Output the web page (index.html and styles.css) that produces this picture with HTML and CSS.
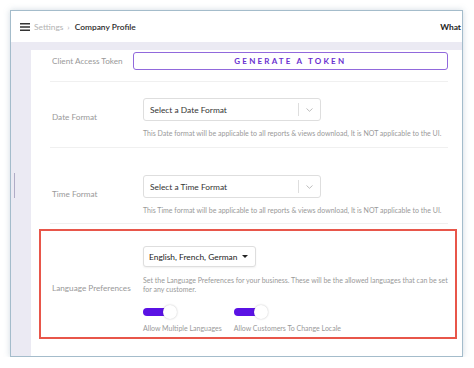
FILE: index.html
```html
<!DOCTYPE html>
<html lang="en">
<head>
  <meta charset="UTF-8">
  <meta name="viewport" content="width=device-width, initial-scale=1.0">
  <title>Company Profile - Settings</title>
  <link rel="stylesheet" href="styles.css">
</head>
<body>
  <div class="frame">
    <header class="topbar">
      <svg class="menu-icon" width="10" height="8" viewBox="0 0 10 8">
        <path d="M0 0.75H10M0 4H10M0 7.25H10" stroke="#333" stroke-width="1.3"/>
      </svg>
      <span class="crumb">Settings</span>
      <span class="crumb-sep">›</span>
      <span class="crumb-current">Company Profile</span>
      <span class="whats-new">What</span>
    </header>

    <div class="main">
      <aside class="sidebar">
        <div class="scroll-mark"></div>
      </aside>

      <div class="content">
        <div class="panel">
          <div class="row row-token">
            <span class="label">Client Access Token</span>
            <button class="token-button">GENERATE A TOKEN</button>
          </div>

          <div class="row row-date">
            <span class="label label-col">Date Format</span>
            <div class="control">
              <div class="select select-wide">
                <span class="select-text">Select a Date Format</span>
                <span class="select-arrow">
                  <svg width="7" height="4" viewBox="0 0 7 4"><path d="M0.5 0.5L3.5 3.3L6.5 0.5" fill="none" stroke="#b5b5b5" stroke-width="0.9"/></svg>
                </span>
              </div>
              <p class="help">This Date format will be applicable to all reports &amp; views download, It is NOT applicable to the UI.</p>
            </div>
          </div>

          <div class="row row-time">
            <span class="label label-col">Time Format</span>
            <div class="control">
              <div class="select select-wide">
                <span class="select-text">Select a Time Format</span>
                <span class="select-arrow">
                  <svg width="7" height="4" viewBox="0 0 7 4"><path d="M0.5 0.5L3.5 3.3L6.5 0.5" fill="none" stroke="#b5b5b5" stroke-width="0.9"/></svg>
                </span>
              </div>
              <p class="help">This Time format will be applicable to all reports &amp; views download, It is NOT applicable to the UI.</p>
            </div>
          </div>

          <div class="highlight">
            <div class="row row-lang">
              <span class="label label-col">Language Preferences</span>
              <div class="control">
                <div class="select select-lang">
                  <span class="select-value">English, French, German</span>
                  <span class="caret"></span>
                </div>
                <p class="help help-lang">Set the Language Preferences for your business. These will be the allowed languages that can be set<br>for any customer.</p>
                <div class="toggles">
                  <div class="toggle-item">
                    <span class="toggle on"></span>
                    <span class="toggle-label">Allow Multiple Languages</span>
                  </div>
                  <div class="toggle-item">
                    <span class="toggle on"></span>
                    <span class="toggle-label">Allow Customers To Change Locale</span>
                  </div>
                </div>
              </div>
            </div>
          </div>
        </div>
      </div>
    </div>
  </div>
</body>
</html>
```

FILE: styles.css
```css
body {
  margin: 0;
  background-color: #fff;
  font-family: Lato, "Open Sans", sans-serif;
  color: #333;
}
.frame {
  margin: 10px 0 0 10px;
  width: 453px;
  height: 347px;
  border: 1px solid #a4bccb;
  box-sizing: border-box;
  overflow: hidden;
  display: flex;
  flex-direction: column;
  box-shadow: 0 0 6px rgba(120, 150, 170, 0.35);
  background-color: #ebeaf3;
}
.topbar {
  height: 31px;
  flex-shrink: 0;
  background-color: #fff;
  display: flex;
  align-items: center;
  padding-left: 9px;
  padding-right: 1px;
  font-size: 8.4px;
  white-space: nowrap;
}
.menu-icon {
  margin-right: 4px;
}
.crumb {
  color: #b3b3b3;
}
.crumb-sep {
  color: #b3b3b3;
  margin: 0 5px 0 4px;
}
.crumb-current {
  color: #2b2b2b;
  font-weight: 600;
}
.whats-new {
  margin-left: auto;
  font-weight: 700;
  color: #222;
}
.main {
  flex: 1;
  display: flex;
}
.sidebar {
  width: 20px;
  flex-shrink: 0;
  background-color: #ebeaf3;
}
.scroll-mark {
  width: 1px;
  height: 25px;
  margin: 131px 0 0 3px;
  background-color: #b0acc6;
}
.content {
  flex: 1;
  padding-top: 8px;
}
.panel {
  background-color: #fff;
  height: 100%;
  padding-left: 8px;
}
.row {
  display: flex;
  align-items: center;
  margin: 0 14px 0 11px;
  padding-left: 2px;
  border-bottom: 1px solid #f0f0f0;
}
.label {
  font-size: 8.2px;
  color: #999;
}
.label-col {
  width: 91px;
  flex-shrink: 0;
  margin-top: -3px;
}
.row-token {
  padding: 2px 0 11px 2px;
  gap: 10px;
}
.token-button {
  flex: 1;
  height: 18px;
  border: 1px solid #9169dc;
  border-radius: 3px;
  background-color: #fff;
  color: #6a2fd0;
  font-family: Lato, "Open Sans", sans-serif;
  font-size: 8px;
  font-weight: 700;
  letter-spacing: 2.2px;
  padding: 0;
}
.row-date {
  padding-top: 16px;
  padding-bottom: 9px;
}
.row-time {
  padding-top: 27px;
  padding-bottom: 8px;
}
.control {
  display: flex;
  flex-direction: column;
}
.select {
  display: flex;
  align-items: center;
  background-color: #fff;
  border: 1px solid #dedede;
  border-radius: 3px;
  box-sizing: border-box;
}
.select-wide {
  width: 178px;
  height: 23px;
}
.select-text {
  flex: 1;
  padding-left: 6px;
  font-size: 8.4px;
  color: #333;
}
.select-arrow {
  width: 21px;
  height: 13px;
  border-left: 1px solid #dedede;
  display: flex;
  align-items: center;
  justify-content: center;
}
.help {
  margin: 8px 0 0;
  font-size: 7px;
  line-height: 9px;
  color: #999;
  white-space: nowrap;
}
.highlight {
  margin: 5px 5px 0 0;
  border: 2px solid #e8564a;
  height: 110px;
  box-sizing: border-box;
}
.row-lang {
  margin: 0;
  padding: 15px 0 0 11px;
  border-bottom: none;
}
.select-lang {
  width: 113px;
  height: 21px;
  box-shadow: 0 1px 2px rgba(0, 0, 0, 0.06);
}
.select-value {
  flex: 1;
  padding-left: 5px;
  font-size: 8.4px;
  color: #222;
}
.caret {
  width: 0;
  height: 0;
  border-left: 3px solid transparent;
  border-right: 3px solid transparent;
  border-top: 3.5px solid #222;
  margin-right: 7px;
}
.help-lang {
  margin-top: 9px;
}
.toggles {
  display: flex;
  gap: 12px;
  margin-top: 11px;
}
.toggle-item {
  display: flex;
  flex-direction: column;
}
.toggle {
  position: relative;
  width: 34px;
  height: 14px;
}
.toggle::before {
  content: "";
  position: absolute;
  left: 0;
  top: 3px;
  width: 26px;
  height: 8px;
  border-radius: 4px;
  background-color: #5a12e4;
}
.toggle::after {
  content: "";
  position: absolute;
  right: 0;
  top: 0;
  width: 14px;
  height: 14px;
  border-radius: 50%;
  background-color: #fff;
  box-shadow: 0 0 2px rgba(0, 0, 0, 0.25);
}
.toggle-label {
  margin-top: 5px;
  font-size: 7px;
  color: #999;
}
```
